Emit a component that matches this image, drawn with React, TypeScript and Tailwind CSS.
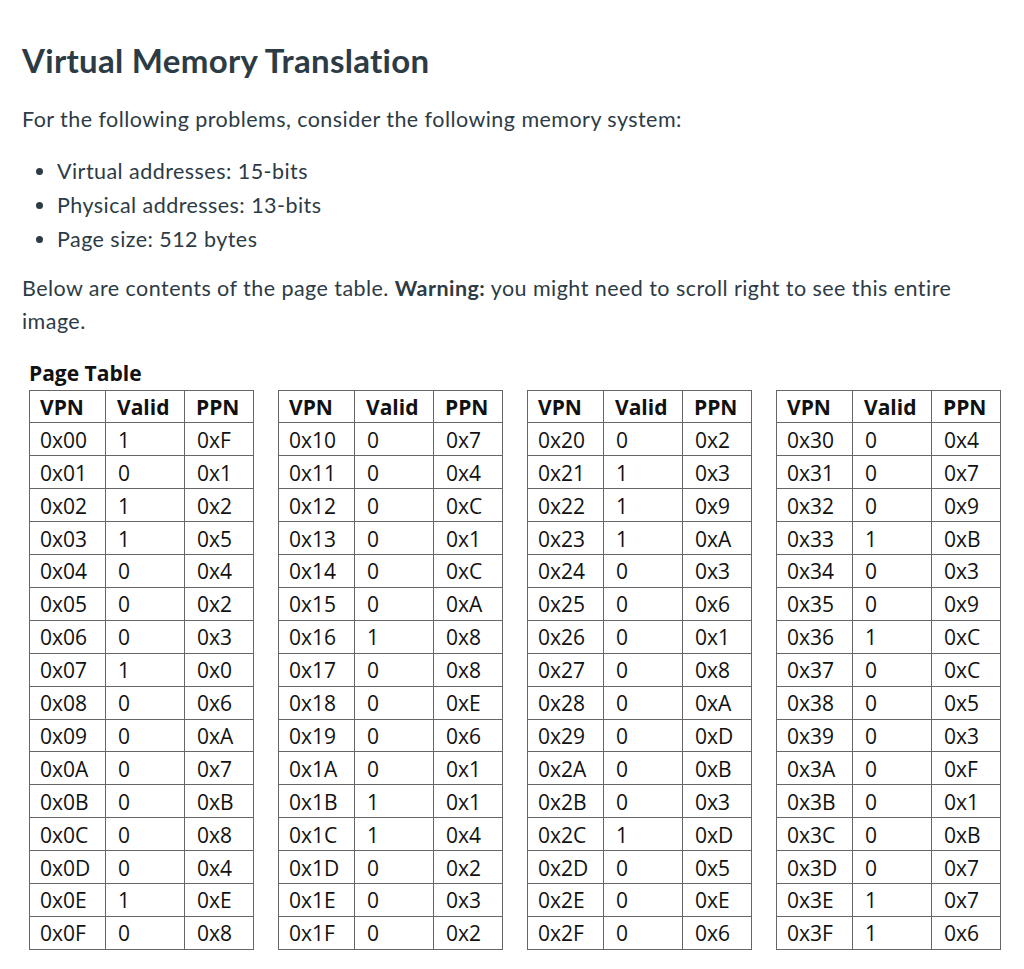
import React from "react";

type Row = [string, string, string];

// page table split into four blocks of 16 entries
const blocks: Row[][] = [
  [
    ["0x00", "1", "0xF"],
    ["0x01", "0", "0x1"],
    ["0x02", "1", "0x2"],
    ["0x03", "1", "0x5"],
    ["0x04", "0", "0x4"],
    ["0x05", "0", "0x2"],
    ["0x06", "0", "0x3"],
    ["0x07", "1", "0x0"],
    ["0x08", "0", "0x6"],
    ["0x09", "0", "0xA"],
    ["0x0A", "0", "0x7"],
    ["0x0B", "0", "0xB"],
    ["0x0C", "0", "0x8"],
    ["0x0D", "0", "0x4"],
    ["0x0E", "1", "0xE"],
    ["0x0F", "0", "0x8"],
  ],
  [
    ["0x10", "0", "0x7"],
    ["0x11", "0", "0x4"],
    ["0x12", "0", "0xC"],
    ["0x13", "0", "0x1"],
    ["0x14", "0", "0xC"],
    ["0x15", "0", "0xA"],
    ["0x16", "1", "0x8"],
    ["0x17", "0", "0x8"],
    ["0x18", "0", "0xE"],
    ["0x19", "0", "0x6"],
    ["0x1A", "0", "0x1"],
    ["0x1B", "1", "0x1"],
    ["0x1C", "1", "0x4"],
    ["0x1D", "0", "0x2"],
    ["0x1E", "0", "0x3"],
    ["0x1F", "0", "0x2"],
  ],
  [
    ["0x20", "0", "0x2"],
    ["0x21", "1", "0x3"],
    ["0x22", "1", "0x9"],
    ["0x23", "1", "0xA"],
    ["0x24", "0", "0x3"],
    ["0x25", "0", "0x6"],
    ["0x26", "0", "0x1"],
    ["0x27", "0", "0x8"],
    ["0x28", "0", "0xA"],
    ["0x29", "0", "0xD"],
    ["0x2A", "0", "0xB"],
    ["0x2B", "0", "0x3"],
    ["0x2C", "1", "0xD"],
    ["0x2D", "0", "0x5"],
    ["0x2E", "0", "0xE"],
    ["0x2F", "0", "0x6"],
  ],
  [
    ["0x30", "0", "0x4"],
    ["0x31", "0", "0x7"],
    ["0x32", "0", "0x9"],
    ["0x33", "1", "0xB"],
    ["0x34", "0", "0x3"],
    ["0x35", "0", "0x9"],
    ["0x36", "1", "0xC"],
    ["0x37", "0", "0xC"],
    ["0x38", "0", "0x5"],
    ["0x39", "0", "0x3"],
    ["0x3A", "0", "0xF"],
    ["0x3B", "0", "0x1"],
    ["0x3C", "0", "0xB"],
    ["0x3D", "0", "0x7"],
    ["0x3E", "1", "0x7"],
    ["0x3F", "1", "0x6"],
  ],
];

function Block({ rows }: { rows: Row[] }) {
  return (
    <table className="table-fixed border-collapse w-[224px] border border-[#666]">
      <colgroup>
        <col className="w-[76px]" />
        <col className="w-[79px]" />
        <col className="w-[69px]" />
      </colgroup>
      <thead>
        <tr className="h-[32.9px]">
          <th className="border border-[#666] pl-[10px] pt-[2px] text-left font-bold">VPN</th>
          <th className="border border-[#666] pl-[11px] pt-[2px] text-left font-bold">Valid</th>
          <th className="border border-[#666] pl-[11px] pt-[2px] text-left font-bold">PPN</th>
        </tr>
      </thead>
      <tbody>
        {rows.map(([vpn, valid, ppn]) => (
          <tr key={vpn} className="h-[32.9px]">
            <td className="border border-[#666] pl-[10px] pt-[2px]">{vpn}</td>
            <td className="border border-[#666] pl-[12px] pt-[2px]">{valid}</td>
            <td className="border border-[#666] pl-[12px] pt-[2px]">{ppn}</td>
          </tr>
        ))}
      </tbody>
    </table>
  );
}

export default function App() {
  return (
    <div className="min-h-screen bg-white font-['Lato',sans-serif] text-[#2d3b45]">
      <div className="w-[980px] pl-[22px] pt-[41px]">
        <h2 className="text-[33px] leading-[1.2] font-bold tracking-[0.3px]">
          Virtual Memory Translation
        </h2>

        <p className="mt-[21px] text-[21.5px] leading-[34px] tracking-[0.45px]">
          For the following problems, consider the following memory system:
        </p>

        <ul className="mt-[18px] list-disc pl-[35px] text-[21.5px] leading-[34px] tracking-[0.45px]">
          <li>Virtual addresses: 15-bits</li>
          <li>Physical addresses: 13-bits</li>
          <li>Page size: 512 bytes</li>
        </ul>

        <p className="mt-[16px] text-[21.5px] leading-[33px] tracking-[0.45px]">
          Below are contents of the page table. <strong>Warning:</strong> you might need to scroll
          right to see this entire image.
        </p>
      </div>

      {/* the table image */}
      <div className="pl-[29px] pt-[23px] font-['Open_Sans',sans-serif] text-[21px] text-[#111]">
        <div className="font-bold leading-[24px]">Page Table</div>
        <div className="mt-[5px] flex gap-[24px] leading-none">
          {blocks.map((rows, i) => (
            <Block key={i} rows={rows} />
          ))}
        </div>
      </div>
    </div>
  );
}
